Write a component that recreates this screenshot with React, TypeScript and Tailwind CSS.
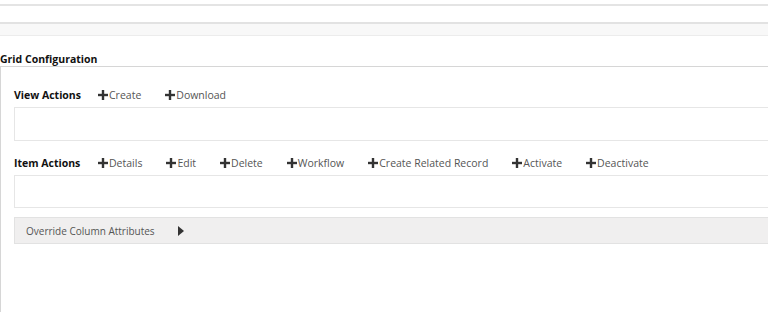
import React from "react";

const Plus = () => (
  <svg width="10" height="10" viewBox="0 0 10 10" className="shrink-0">
    <rect x="3.8" y="0" width="2.4" height="10" fill="#333" />
    <rect x="0" y="3.8" width="10" height="2.4" fill="#333" />
  </svg>
);

const Action = ({ label }: { label: string }) => (
  <span className="inline-flex items-center gap-[1px] text-[#555]">
    <Plus />
    <span>{label}</span>
  </span>
);

const Row = ({ title, actions }: { title: string; actions: string[] }) => (
  <div className="flex items-center h-[22px]">
    <div className="w-[84px] font-bold text-[#111] text-[10.5px]">{title}</div>
    <div className="flex items-center gap-[24px]">
      {actions.map((a) => (
        <Action key={a} label={a} />
      ))}
    </div>
  </div>
);

export default function App() {
  return (
    <div
      className="w-[768px] h-[312px] overflow-hidden bg-white text-[10.5px] leading-[14px]"
      style={{ fontFamily: '"Open Sans", "Noto Sans", sans-serif' }}
    >
      <div className="h-[4px] bg-white" />
      <div className="h-[2px] bg-[#e4e4e4]" />
      <div className="h-[16px] bg-white" />
      <div className="h-[2px] bg-[#e2e2e2]" />
      <div className="h-[12px] bg-[#f8f8f8] border-b border-[#ececec]" />
      <div className="pt-[16px] h-[30px] font-bold text-[#111] text-[10.5px] leading-[14px]">Grid Configuration</div>
      <div className="w-[820px] h-[300px] border-t border-l border-[#d6d6d6] pl-[13px] pt-[17px]">
        <Row title="View Actions" actions={["Create", "Download"]} />
        <div className="h-[34px] mt-[1px] border border-[#e6e6e6]" />
        <div className="mt-[11px]">
          <Row title="Item Actions" actions={["Details", "Edit", "Delete", "Workflow", "Create Related Record", "Activate", "Deactivate"]} />
        </div>
        <div className="h-[33px] mt-[1px] border border-[#e6e6e6]" />
        <div className="mt-[9px] h-[27px] bg-[#f0efef] border border-[#e2e2e2] flex items-center pl-[11px] text-[#555] text-[10px]">
          <span className="w-[152px]">Override Column Attributes</span>
          <svg width="6" height="10" viewBox="0 0 6 10">
            <polygon points="0,0 6,5 0,10" fill="#333" />
          </svg>
        </div>
      </div>
    </div>
  );
}
